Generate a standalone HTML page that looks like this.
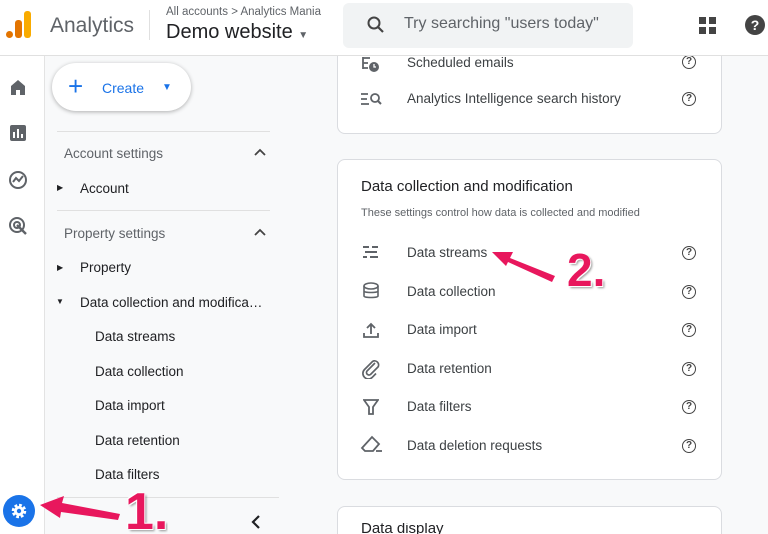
<!DOCTYPE html>
<html style="width:768px;height:534px;overflow:hidden"><head><style>
*{box-sizing:border-box;margin:0;padding:0}
body{width:768px;height:534px;overflow:hidden;background:#f8f9fa;font-family:"Liberation Sans",sans-serif;color:#202124;position:relative}
.a{position:absolute}
.hdr{left:0;top:0;width:768px;height:56px;background:#fff;border-bottom:1px solid #e0e0e0;z-index:5}
.z{z-index:6}
.rail{left:0;top:56px;width:45px;height:478px;background:#fff;border-right:1px solid #e3e3e3}
.card{background:#fff;border:1px solid #dadce0;border-radius:8px}
.row{font-size:13.5px;color:#3c4043}
.q{width:14px;height:14px;border:1.6px solid #444;border-radius:50%;font-size:10px;font-weight:bold;text-align:center;line-height:11px;color:#444}
.sb{font-size:13.5px;color:#202124}
.sec{font-size:13.5px;color:#5f6368}
</style></head><body>
<div class="a card" style="left:337px;top:20px;width:385px;height:114px"></div>
<svg class="a" style="left:361px;top:55px" width="20" height="18"><path d="M2 2v12M2 3h7M2 8h5M2 13h5" stroke="#5f6368" stroke-width="1.8"/><circle cx="13" cy="12" r="5" fill="#5f6368"/><path d="M13 9v3h2" stroke="#fff" stroke-width="1.3" fill="none"/></svg>
<div class="a row" style="left:407px;top:55px">Scheduled emails</div>
<div class="a q" style="left:682px;top:55px">?</div>
<svg class="a" style="left:360px;top:91px" width="22" height="16"><path d="M1 3h7M1 8h6M1 13h8" stroke="#5f6368" stroke-width="1.8"/><circle cx="15" cy="7" r="4" fill="none" stroke="#5f6368" stroke-width="1.8"/><path d="M18 10l3 3" stroke="#5f6368" stroke-width="2"/></svg>
<div class="a row" style="left:407px;top:91px">Analytics Intelligence search history</div>
<div class="a q" style="left:682px;top:92px">?</div>

<div class="a hdr"></div>
<div class="a z" style="left:6px;top:31px;width:7px;height:7px;border-radius:50%;background:#e37400"></div>
<div class="a z" style="left:15px;top:20px;width:7px;height:18px;border-radius:3px;background:#e37400"></div>
<div class="a z" style="left:24px;top:11px;width:7px;height:27px;border-radius:3px;background:#f9ab00"></div>
<div class="a z" style="left:50px;top:14px;font-size:21px;color:#5f6368">Analytics</div>
<div class="a z" style="left:149px;top:10px;width:1px;height:30px;background:#e0e0e0"></div>
<div class="a z" style="left:166px;top:6px;font-size:11.5px;color:#5f6368">All accounts &gt; Analytics Mania</div>
<div class="a z" style="left:166px;top:21px;font-size:20px;color:#202124">Demo website <span style="font-size:10px;color:#5f6368">▼</span></div>
<div class="a z" style="left:343px;top:3px;width:290px;height:45px;background:#f1f3f4;border-radius:6px"></div>
<svg class="a z" style="left:366px;top:15px" width="20" height="20" viewBox="0 0 20 20"><circle cx="8" cy="8" r="5.5" fill="none" stroke="#444" stroke-width="2"/><path d="M12 12l5 5" stroke="#444" stroke-width="2.2"/></svg>
<div class="a z" style="left:404px;top:15px;font-size:16px;color:#5f6368">Try searching "users today"</div>
<svg class="a z" style="left:699px;top:17px" width="18" height="18"><rect x="0" y="0" width="7" height="7" fill="#444"/><rect x="10" y="0" width="7" height="7" fill="#444"/><rect x="0" y="10" width="7" height="7" fill="#444"/><rect x="10" y="10" width="7" height="7" fill="#444"/></svg>
<div class="a z" style="left:745px;top:15px;width:20px;height:20px;border-radius:50%;background:#444;color:#fff;font-weight:bold;font-size:14px;text-align:center;line-height:20px">?</div>

<div class="a rail"></div>
<svg class="a" style="left:9px;top:78px" width="18" height="18"><path d="M2 8L9 2l7 6v9h-5v-5H7v5H2z" fill="#5f6368"/></svg>
<svg class="a" style="left:9px;top:124px" width="18" height="18"><rect x="1" y="1" width="16" height="16" rx="2" fill="#5f6368"/><rect x="4" y="8" width="2" height="6" fill="#fff"/><rect x="8" y="5" width="2" height="9" fill="#fff"/><rect x="12" y="10" width="2" height="4" fill="#fff"/></svg>
<svg class="a" style="left:8px;top:170px" width="20" height="20"><circle cx="10" cy="10" r="8" fill="none" stroke="#5f6368" stroke-width="2"/><path d="M5 12l3-4 3 3 4-5" fill="none" stroke="#5f6368" stroke-width="2"/></svg>
<svg class="a" style="left:8px;top:216px" width="20" height="20"><circle cx="9" cy="9" r="7" fill="none" stroke="#5f6368" stroke-width="2"/><circle cx="9" cy="9" r="3" fill="none" stroke="#5f6368" stroke-width="2"/><path d="M9 9l9 9" stroke="#5f6368" stroke-width="2.4"/></svg>
<div class="a" style="left:3px;top:495px;width:32px;height:32px;border-radius:50%;background:#1a73e8"></div>
<svg class="a" style="left:9px;top:501px" width="20" height="20" viewBox="0 0 20 20"><circle cx="10" cy="10" r="5.5" fill="none" stroke="#fff" stroke-width="3.5" stroke-dasharray="2.6 1.7"/><circle cx="10" cy="10" r="5" fill="#fff"/><circle cx="10" cy="10" r="2.2" fill="#1a73e8"/></svg>

<div class="a" style="left:52px;top:63px;width:139px;height:48px;background:#fff;border-radius:24px;box-shadow:0 1px 4px rgba(0,0,0,.3)"></div>
<div class="a" style="left:68px;top:73px;font-size:26px;color:#1a73e8;line-height:26px">+</div>
<div class="a" style="left:102px;top:80px;font-size:14px;color:#1a73e8">Create</div>
<div class="a" style="left:162px;top:82px;font-size:10px;color:#1a73e8">▼</div>
<div class="a" style="left:57px;top:131px;width:213px;height:1px;background:#e0e0e0"></div>
<div class="a sec" style="left:64px;top:146px">Account settings</div>
<svg class="a" style="left:254px;top:148px" width="12" height="8"><path d="M1 7l5-5 5 5" fill="none" stroke="#444" stroke-width="1.8"/></svg>
<div class="a" style="left:57px;top:183px;font-size:8px">▶</div>
<div class="a sb" style="left:80px;top:181px">Account</div>
<div class="a" style="left:57px;top:210px;width:213px;height:1px;background:#e0e0e0"></div>
<div class="a sec" style="left:64px;top:226px">Property settings</div>
<svg class="a" style="left:254px;top:228px" width="12" height="8"><path d="M1 7l5-5 5 5" fill="none" stroke="#444" stroke-width="1.8"/></svg>
<div class="a" style="left:57px;top:263px;font-size:8px">▶</div>
<div class="a sb" style="left:80px;top:260px">Property</div>
<div class="a" style="left:56px;top:297px;font-size:8px">▼</div>
<div class="a sb" style="left:80px;top:295px">Data collection and modifica…</div>
<div class="a sb" style="left:95px;top:329px">Data streams</div>
<div class="a sb" style="left:95px;top:364px">Data collection</div>
<div class="a sb" style="left:95px;top:398px">Data import</div>
<div class="a sb" style="left:95px;top:433px">Data retention</div>
<div class="a sb" style="left:95px;top:467px">Data filters</div>
<div class="a" style="left:57px;top:497px;width:222px;height:1px;background:#e0e0e0"></div>
<svg class="a" style="left:251px;top:515px" width="10" height="14"><path d="M8 1L2 7l6 6" fill="none" stroke="#202124" stroke-width="2.2"/></svg>

<div class="a card" style="left:337px;top:159px;width:385px;height:321px"></div>
<div class="a" style="left:361px;top:178px;font-size:15px;color:#202124">Data collection and modification</div>
<div class="a" style="left:361px;top:207px;font-size:11px;color:#5f6368">These settings control how data is collected and modified</div>
<svg class="a" style="left:362px;top:245px" width="18" height="16"><path d="M1 2h6M10 2h6M3 7h12M1 12h4M8 12h8" stroke="#5f6368" stroke-width="2"/></svg>
<div class="a row" style="left:407px;top:245px">Data streams</div>
<div class="a q" style="left:682px;top:246px">?</div>
<svg class="a" style="left:363px;top:282px" width="16" height="18"><ellipse cx="8" cy="4" rx="7" ry="3" fill="none" stroke="#5f6368" stroke-width="1.6"/><path d="M1 4v10c0 2 14 2 14 0V4M1 9c0 2 14 2 14 0" fill="none" stroke="#5f6368" stroke-width="1.6"/></svg>
<div class="a row" style="left:407px;top:284px">Data collection</div>
<div class="a q" style="left:682px;top:285px">?</div>
<svg class="a" style="left:363px;top:321px" width="16" height="18"><path d="M8 13V3M4 7l4-4 4 4M1 12v4h14v-4" fill="none" stroke="#5f6368" stroke-width="1.8"/></svg>
<div class="a row" style="left:407px;top:322px">Data import</div>
<div class="a q" style="left:682px;top:323px">?</div>
<svg class="a" style="left:361px;top:359px" width="20" height="20"><path d="M14 4L6 12a2.5 2.5 0 0 0 3.5 3.5L17 8a4 4 0 0 0-5.5-5.5L3.5 10.5a5.5 5.5 0 0 0 7.8 7.8L15 14.5" fill="none" stroke="#5f6368" stroke-width="1.7"/></svg>
<div class="a row" style="left:407px;top:361px">Data retention</div>
<div class="a q" style="left:682px;top:362px">?</div>
<svg class="a" style="left:363px;top:398px" width="16" height="18"><path d="M1 2h14l-5 7v7H6V9z" fill="none" stroke="#5f6368" stroke-width="1.8"/></svg>
<div class="a row" style="left:407px;top:399px">Data filters</div>
<div class="a q" style="left:682px;top:400px">?</div>
<svg class="a" style="left:360px;top:434px" width="24" height="20"><path d="M2 14L12 3l7 7-6 7H5z" fill="none" stroke="#5f6368" stroke-width="1.8"/><path d="M16 17h6" stroke="#5f6368" stroke-width="1.8"/></svg>
<div class="a row" style="left:407px;top:438px">Data deletion requests</div>
<div class="a q" style="left:682px;top:439px">?</div>

<div class="a card" style="left:337px;top:506px;width:385px;height:28px;border-bottom:none;border-radius:8px 8px 0 0"></div>
<div class="a" style="left:361px;top:523px;font-size:15px;line-height:11px;height:11px;overflow:hidden">Data display</div>

<svg class="a" style="left:0;top:0;z-index:7" width="768" height="534">
<path d="M555 276 L510 258 L513 252 L492 252 L506 266 L508 262 L552 282Z" fill="#e8175d"/>
<path d="M120 514 L62 503 L64 496 L40 505 L60 518 L61 512 L118 520Z" fill="#e8175d"/>
</svg>
<div class="a" style="left:567px;top:245px;font-size:46px;line-height:50px;font-weight:bold;color:#e8175d;text-shadow:1px 1px 0 #fff,-1px -1px 0 #fff,2px 2px 2px rgba(0,0,0,.4)">2.</div>
<div class="a" style="left:125px;top:483px;height:51px;overflow:hidden;font-size:52px;line-height:58px;font-weight:bold;color:#e8175d;text-shadow:1px 1px 0 #fff,-1px -1px 0 #fff,2px 2px 2px rgba(0,0,0,.4)">1.</div>
</body></html>
